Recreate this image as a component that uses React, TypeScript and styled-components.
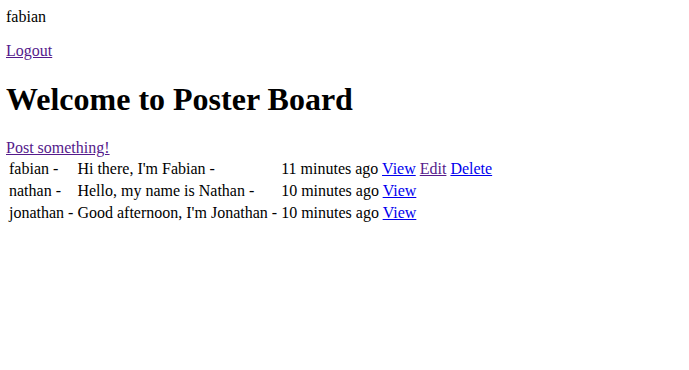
import React from "react";
import styled, {createGlobalStyle} from "styled-components";

const GlobalStyle = createGlobalStyle`
    body {
        margin: 8px 8px 8px 6px;
        font-family: "Liberation Serif", "Times New Roman", serif;
        font-size: 16px;
        color: #000;
        background: #fff;
    }
`;

type Post = {
    author: string;
    body: string;
    age: string;
    mine: boolean;
};

const posts: Post[] = [
    {author: "fabian", body: "Hi there, I'm Fabian", age: "11 minutes ago", mine: true},
    {author: "nathan", body: "Hello, my name is Nathan", age: "10 minutes ago", mine: false},
    {author: "jonathan", body: "Good afternoon, I'm Jonathan", age: "10 minutes ago", mine: false},
];

const App = () => {
    return <>
        <GlobalStyle/>
        <UserName>fabian</UserName>
        <Para><Link href="#" $visited>Logout</Link></Para>
        <Title>Welcome to Poster Board</Title>
        <Link href="#" $visited>Post something!</Link>
        <PostTable>
            <tbody>
            {posts.map(post => <tr key={post.author}>
                <Cell>{post.author} -</Cell>
                <Cell>{post.body} -</Cell>
                <Cell>
                    {post.age} <Link href="#">View</Link>
                    {post.mine ? <> <Link href="#" $visited>Edit</Link> <Link href="#">Delete</Link></> : null}
                </Cell>
            </tr>)}
            </tbody>
        </PostTable>
    </>
};

export default App;

const UserName = styled.div`
    line-height: normal;
`;

const Para = styled.p`
    margin: 15.5px 0 16px;
`;

const Title = styled.h1`
    font-size: 32px;
    font-weight: bold;
    margin: 21.44px 0;
`;

const Link = styled.a<{ $visited?: boolean }>`
    color: ${props => props.$visited ? "#551a8b" : "#0000ee"};
    text-decoration: underline;
`;

const PostTable = styled.table`
    border-spacing: 2px;
`;

const Cell = styled.td`
    padding: 1px;
    white-space: nowrap;
`;
